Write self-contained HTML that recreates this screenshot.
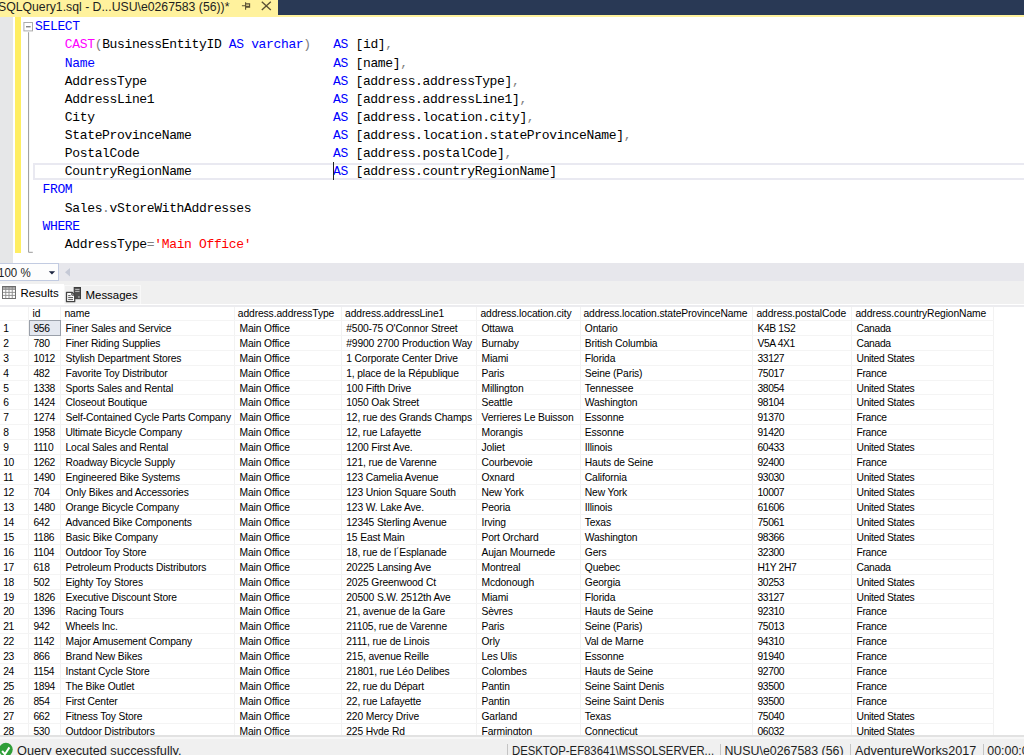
<!DOCTYPE html>
<html><head><meta charset="utf-8"><title>SSMS</title>
<style>
html,body{margin:0;padding:0;}
body{width:1024px;height:755px;overflow:hidden;background:#fff;position:relative;font-family:"Liberation Sans",sans-serif;color:#000;}
.abs{position:absolute;}
#topbar{left:0;top:0;width:1024px;height:15px;background:#293955;}
#topline{left:0;top:14.6px;width:1024px;height:2.6px;background:#FFF29D;}
#tab{left:0;top:0;width:278px;height:17px;background:#FFF29D;}
#tabtxt{left:-2.2px;top:-2.4px;font-size:12.3px;line-height:18px;white-space:pre;color:#1e1e1e;transform:scaleX(0.996);transform-origin:0 0;}
#gutter{left:0;top:17.3px;width:13.3px;height:246px;background:#E6E7E8;}
#ybar{left:15.1px;top:17.2px;width:5.8px;height:235.5px;background:#FFEE62;}
.code{left:35.05px;font-family:"Liberation Mono",monospace;font-size:13px;letter-spacing:-0.35px;line-height:18px;height:18px;white-space:pre;color:#000;}
.k{color:#0000FF}.f{color:#FF00FF}.g{color:#808080}.s{color:#FF0000}
#curline{left:32.8px;top:162.7px;width:1000px;height:13.7px;border:2px solid #E9E9F1;}
#caret{left:333.1px;top:162.4px;width:1.4px;height:17.3px;background:#222;}
#zoombar{left:0;top:263.2px;width:1024px;height:17.5px;background:#E7E7EC;}
#zoombox{left:-2px;top:263.3px;width:58.8px;height:16.2px;background:#FDFDFD;border:1px solid #C2CBE1;}
#zoomtxt{left:-2.5px;top:263.7px;font-size:12.2px;line-height:18px;white-space:pre;color:#1e1e1e;transform:scaleX(0.945);transform-origin:0 0;}
#tabsrow{left:0;top:280.7px;width:1024px;height:23.2px;background:#F0F0F0;}
#restab{left:0;top:283.5px;width:63.7px;height:21.5px;background:#fff;}
#msgtab{left:63.8px;top:285px;width:74.8px;height:17.8px;background:#F0F0F0;border:1px solid #F8F8F8;}
.tl{font-size:11.45px;line-height:14px;white-space:pre;color:#000;}
#grid{left:0;top:303.9px;width:1024px;height:431.2px;background:#fff;}
.gt{font-size:10.3px;line-height:15px;height:15px;white-space:pre;color:#000;letter-spacing:-0.15px;}
.gh{letter-spacing:-0.11px;}
.gn{letter-spacing:-0.4px;}
.gc{letter-spacing:-0.3px;}
.hl{height:1px;background:#F4F4F4;left:0;width:993.6px;}
.vl{width:1px;background:#F2F2F2;top:305.5px;height:429.5px;}
#status{left:0;top:735px;width:1024px;height:20px;background:#F0F0F0;}
#stl1{left:0;top:735px;width:1024px;height:1.7px;background:#E2E2E2;}
#stl2{left:0;top:736.7px;width:1024px;height:2.3px;background:#F7F7F7;}
.st{font-size:12.4px;line-height:18px;white-space:pre;color:#1e1e1e;top:741.6px;transform:scaleX(1.034);transform-origin:0 0;}
.ss{width:1px;top:743.5px;height:12px;background:#C4C4C4;}
</style></head><body>

<div class="abs" id="topbar"></div><div class="abs" id="topline"></div><div class="abs" id="tab"></div>
<div class="abs" id="tabtxt">SQLQuery1.sql - D...USU\e0267583 (56))*</div>
<svg class="abs" style="left:241px;top:1px" width="12" height="11" viewBox="0 0 12 11"><g fill="none" stroke="#5A5034" stroke-width="1.1"><path d="M0.9 4.75H4.6M4.6 1.2V8.7M4.6 2.9H8.6V6.3H4.6M4.6 5.4H8.6"/></g></svg>
<svg class="abs" style="left:260px;top:0px" width="13" height="12" viewBox="0 0 13 12"><g fill="none" stroke="#5A5034" stroke-width="1.35"><path d="M1.8 1.8L10.8 10M10.8 1.8L1.8 10"/></g></svg>
<div class="abs" id="gutter"></div><div class="abs" id="ybar"></div>
<svg class="abs" style="left:22px;top:20px" width="14" height="236" viewBox="0 0 14 236"><g fill="none" stroke-width="1"><path d="M6.6 12.2V232.3H10.8" stroke="#9A9A9A"/><rect x="1.9" y="2.5" width="8.6" height="8.4" fill="#fff" stroke="#ABABAB"/></g><path d="M4 6.8H8.6" stroke="#555" stroke-width="1"/></svg>
<div class="abs" id="curline"></div>
<div class="abs code" style="top:18.30px"><span class="k">SELECT</span></div>
<div class="abs code" style="top:36.42px">    <span class="f">CAST</span><span class="g">(</span>BusinessEntityID <span class="k">AS</span> <span class="k">varchar</span><span class="g">)</span>   <span class="k">AS</span> [id]<span class="g">,</span></div>
<div class="abs code" style="top:54.54px">    <span class="k">Name</span>                                <span class="k">AS</span> [name]<span class="g">,</span></div>
<div class="abs code" style="top:72.66px">    AddressType                         <span class="k">AS</span> [address.addressType]<span class="g">,</span></div>
<div class="abs code" style="top:90.78px">    AddressLine1                        <span class="k">AS</span> [address.addressLine1]<span class="g">,</span></div>
<div class="abs code" style="top:108.90px">    City                                <span class="k">AS</span> [address.location.city]<span class="g">,</span></div>
<div class="abs code" style="top:127.02px">    StateProvinceName                   <span class="k">AS</span> [address.location.stateProvinceName]<span class="g">,</span></div>
<div class="abs code" style="top:145.14px">    PostalCode                          <span class="k">AS</span> [address.postalCode]<span class="g">,</span></div>
<div class="abs code" style="top:163.26px">    CountryRegionName                   <span class="k">AS</span> [address.countryRegionName]</div>
<div class="abs code" style="top:181.38px"> <span class="k">FROM</span></div>
<div class="abs code" style="top:199.50px">    Sales<span class="g">.</span>vStoreWithAddresses</div>
<div class="abs code" style="top:217.62px"> <span class="k">WHERE</span></div>
<div class="abs code" style="top:235.74px">    AddressType<span class="g">=</span><span class="s">'Main Office'</span></div>
<div class="abs" id="caret"></div>
<div class="abs" id="zoombar"></div><div class="abs" id="zoombox"></div><div class="abs" id="zoomtxt">100 %</div>
<svg class="abs" style="left:48px;top:269px" width="8" height="7" viewBox="0 0 8 7"><path d="M0.8 2.2H7.1L3.95 5.5Z" fill="#1B2540"/></svg>
<svg class="abs" style="left:64px;top:267px" width="8" height="11" viewBox="0 0 8 11"><path d="M6 1V9.6L1 5.3Z" fill="#C5C9D6"/></svg>
<div class="abs" id="tabsrow"></div><div class="abs" id="restab"></div><div class="abs" id="msgtab"></div>
<div class="abs tl" style="left:20.5px;top:286.4px">Results</div>
<div class="abs tl" style="left:85.5px;top:288.2px">Messages</div>
<svg class="abs" style="left:2px;top:286px" width="14" height="13" viewBox="0 0 14 13"><rect x="0.5" y="0.5" width="13" height="12" fill="#fff"/><rect x="0.5" y="0.5" width="13" height="3" fill="#B5B5B5"/><path d="M0.5 3.4H13.5M0.5 6.4H13.5M0.5 9.4H13.5M3.75 0.5V12.5M7 0.5V12.5M10.25 0.5V12.5" stroke="#8C8C8C" stroke-width="0.9" fill="none"/><rect x="0.5" y="0.5" width="13" height="12" fill="none" stroke="#707070" stroke-width="1"/><path d="M0.5 0.6H13.5" stroke="#6A6A6A" stroke-width="1.2"/></svg>
<svg class="abs" style="left:65px;top:286px" width="18" height="17" viewBox="0 0 18 17"><rect x="9.2" y="1.5" width="6.3" height="11.2" fill="#505050" stroke="#3C3C3C" stroke-width="1"/><path d="M10.2 3.4H14.5M10.2 5.4H14.5" stroke="#C8C8C8" stroke-width="0.9"/><rect x="13.3" y="10.4" width="1.2" height="1.2" fill="#ddd"/><path d="M1.5 6.3H7L9.7 9V15.7H1.5Z" fill="#fff" stroke="#444" stroke-width="1.3" stroke-linejoin="round"/><path d="M6.8 6.5V9.2H9.5" fill="none" stroke="#444" stroke-width="1"/><path d="M3.2 9.6H5.6M3.2 11.6H8M3.2 13.6H8" stroke="#555" stroke-width="1"/></svg>
<div class="abs" id="grid"></div>
<div class="abs vl" style="left:28.3px"></div>
<div class="abs vl" style="left:60.4px"></div>
<div class="abs vl" style="left:234.3px"></div>
<div class="abs vl" style="left:341px"></div>
<div class="abs vl" style="left:476.4px"></div>
<div class="abs vl" style="left:579.9px"></div>
<div class="abs vl" style="left:752.4px"></div>
<div class="abs vl" style="left:851.3px"></div>
<div class="abs vl" style="left:993.1px"></div>
<div class="abs hl" style="top:305.4px;height:1.3px;width:1024px;background:#ECECEF"></div>
<div class="abs hl" style="top:319.80px"></div>
<div class="abs hl" style="top:334.73px"></div>
<div class="abs hl" style="top:349.66px"></div>
<div class="abs hl" style="top:364.59px"></div>
<div class="abs hl" style="top:379.52px"></div>
<div class="abs hl" style="top:394.45px"></div>
<div class="abs hl" style="top:409.38px"></div>
<div class="abs hl" style="top:424.31px"></div>
<div class="abs hl" style="top:439.24px"></div>
<div class="abs hl" style="top:454.17px"></div>
<div class="abs hl" style="top:469.10px"></div>
<div class="abs hl" style="top:484.03px"></div>
<div class="abs hl" style="top:498.96px"></div>
<div class="abs hl" style="top:513.89px"></div>
<div class="abs hl" style="top:528.82px"></div>
<div class="abs hl" style="top:543.75px"></div>
<div class="abs hl" style="top:558.68px"></div>
<div class="abs hl" style="top:573.61px"></div>
<div class="abs hl" style="top:588.54px"></div>
<div class="abs hl" style="top:603.47px"></div>
<div class="abs hl" style="top:618.40px"></div>
<div class="abs hl" style="top:633.33px"></div>
<div class="abs hl" style="top:648.26px"></div>
<div class="abs hl" style="top:663.19px"></div>
<div class="abs hl" style="top:678.12px"></div>
<div class="abs hl" style="top:693.05px"></div>
<div class="abs hl" style="top:707.98px"></div>
<div class="abs hl" style="top:722.91px"></div>
<div class="abs hl" style="top:737.84px"></div>
<div class="abs" style="left:29px;top:319.80px;width:30px;height:14px;background:#E4E8F0;border:1px solid #9AA0AA"></div>
<div class="abs gt gh" style="left:32.5px;top:305.90px">id</div>
<div class="abs gt gh" style="left:64.5px;top:305.90px">name</div>
<div class="abs gt gh" style="left:237.8px;top:305.90px">address.addressType</div>
<div class="abs gt gh" style="left:345.1px;top:305.90px">address.addressLine1</div>
<div class="abs gt gh" style="left:480.5px;top:305.90px">address.location.city</div>
<div class="abs gt gh" style="left:583.5px;top:305.90px">address.location.stateProvinceName</div>
<div class="abs gt gh" style="left:756.5px;top:305.90px">address.postalCode</div>
<div class="abs gt gh" style="left:855.5px;top:305.90px">address.countryRegionName</div>
<div class="abs gt gn" style="left:3.3px;top:320.80px">1</div>
<div class="abs gt gn" style="left:33.5px;top:320.80px">956</div>
<div class="abs gt" style="left:65.5px;top:320.80px">Finer Sales and Service</div>
<div class="abs gt" style="left:239.6px;top:320.80px">Main Office</div>
<div class="abs gt" style="left:346.3px;top:320.80px">#500-75 O'Connor Street</div>
<div class="abs gt" style="left:481.5px;top:320.80px">Ottawa</div>
<div class="abs gt" style="left:584.8px;top:320.80px">Ontario</div>
<div class="abs gt gn" style="left:757.5px;top:320.80px">K4B 1S2</div>
<div class="abs gt gc" style="left:856.5px;top:320.80px">Canada</div>
<div class="abs gt gn" style="left:3.3px;top:335.73px">2</div>
<div class="abs gt gn" style="left:33.5px;top:335.73px">780</div>
<div class="abs gt" style="left:65.5px;top:335.73px">Finer Riding Supplies</div>
<div class="abs gt" style="left:239.6px;top:335.73px">Main Office</div>
<div class="abs gt" style="left:346.3px;top:335.73px">#9900 2700 Production Way</div>
<div class="abs gt" style="left:481.5px;top:335.73px">Burnaby</div>
<div class="abs gt" style="left:584.8px;top:335.73px">British Columbia</div>
<div class="abs gt gn" style="left:757.5px;top:335.73px">V5A 4X1</div>
<div class="abs gt gc" style="left:856.5px;top:335.73px">Canada</div>
<div class="abs gt gn" style="left:3.3px;top:350.66px">3</div>
<div class="abs gt gn" style="left:33.5px;top:350.66px">1012</div>
<div class="abs gt" style="left:65.5px;top:350.66px">Stylish Department Stores</div>
<div class="abs gt" style="left:239.6px;top:350.66px">Main Office</div>
<div class="abs gt" style="left:346.3px;top:350.66px">1 Corporate Center Drive</div>
<div class="abs gt" style="left:481.5px;top:350.66px">Miami</div>
<div class="abs gt" style="left:584.8px;top:350.66px">Florida</div>
<div class="abs gt gn" style="left:757.5px;top:350.66px">33127</div>
<div class="abs gt gc" style="left:856.5px;top:350.66px">United States</div>
<div class="abs gt gn" style="left:3.3px;top:365.59px">4</div>
<div class="abs gt gn" style="left:33.5px;top:365.59px">482</div>
<div class="abs gt" style="left:65.5px;top:365.59px">Favorite Toy Distributor</div>
<div class="abs gt" style="left:239.6px;top:365.59px">Main Office</div>
<div class="abs gt" style="left:346.3px;top:365.59px">1, place de la République</div>
<div class="abs gt" style="left:481.5px;top:365.59px">Paris</div>
<div class="abs gt" style="left:584.8px;top:365.59px">Seine (Paris)</div>
<div class="abs gt gn" style="left:757.5px;top:365.59px">75017</div>
<div class="abs gt gc" style="left:856.5px;top:365.59px">France</div>
<div class="abs gt gn" style="left:3.3px;top:380.52px">5</div>
<div class="abs gt gn" style="left:33.5px;top:380.52px">1338</div>
<div class="abs gt" style="left:65.5px;top:380.52px">Sports Sales and Rental</div>
<div class="abs gt" style="left:239.6px;top:380.52px">Main Office</div>
<div class="abs gt" style="left:346.3px;top:380.52px">100 Fifth Drive</div>
<div class="abs gt" style="left:481.5px;top:380.52px">Millington</div>
<div class="abs gt" style="left:584.8px;top:380.52px">Tennessee</div>
<div class="abs gt gn" style="left:757.5px;top:380.52px">38054</div>
<div class="abs gt gc" style="left:856.5px;top:380.52px">United States</div>
<div class="abs gt gn" style="left:3.3px;top:395.45px">6</div>
<div class="abs gt gn" style="left:33.5px;top:395.45px">1424</div>
<div class="abs gt" style="left:65.5px;top:395.45px">Closeout Boutique</div>
<div class="abs gt" style="left:239.6px;top:395.45px">Main Office</div>
<div class="abs gt" style="left:346.3px;top:395.45px">1050 Oak Street</div>
<div class="abs gt" style="left:481.5px;top:395.45px">Seattle</div>
<div class="abs gt" style="left:584.8px;top:395.45px">Washington</div>
<div class="abs gt gn" style="left:757.5px;top:395.45px">98104</div>
<div class="abs gt gc" style="left:856.5px;top:395.45px">United States</div>
<div class="abs gt gn" style="left:3.3px;top:410.38px">7</div>
<div class="abs gt gn" style="left:33.5px;top:410.38px">1274</div>
<div class="abs gt" style="left:65.5px;top:410.38px">Self-Contained Cycle Parts Company</div>
<div class="abs gt" style="left:239.6px;top:410.38px">Main Office</div>
<div class="abs gt" style="left:346.3px;top:410.38px">12, rue des Grands Champs</div>
<div class="abs gt" style="left:481.5px;top:410.38px">Verrieres Le Buisson</div>
<div class="abs gt" style="left:584.8px;top:410.38px">Essonne</div>
<div class="abs gt gn" style="left:757.5px;top:410.38px">91370</div>
<div class="abs gt gc" style="left:856.5px;top:410.38px">France</div>
<div class="abs gt gn" style="left:3.3px;top:425.31px">8</div>
<div class="abs gt gn" style="left:33.5px;top:425.31px">1958</div>
<div class="abs gt" style="left:65.5px;top:425.31px">Ultimate Bicycle Company</div>
<div class="abs gt" style="left:239.6px;top:425.31px">Main Office</div>
<div class="abs gt" style="left:346.3px;top:425.31px">12, rue Lafayette</div>
<div class="abs gt" style="left:481.5px;top:425.31px">Morangis</div>
<div class="abs gt" style="left:584.8px;top:425.31px">Essonne</div>
<div class="abs gt gn" style="left:757.5px;top:425.31px">91420</div>
<div class="abs gt gc" style="left:856.5px;top:425.31px">France</div>
<div class="abs gt gn" style="left:3.3px;top:440.24px">9</div>
<div class="abs gt gn" style="left:33.5px;top:440.24px">1110</div>
<div class="abs gt" style="left:65.5px;top:440.24px">Local Sales and Rental</div>
<div class="abs gt" style="left:239.6px;top:440.24px">Main Office</div>
<div class="abs gt" style="left:346.3px;top:440.24px">1200 First Ave.</div>
<div class="abs gt" style="left:481.5px;top:440.24px">Joliet</div>
<div class="abs gt" style="left:584.8px;top:440.24px">Illinois</div>
<div class="abs gt gn" style="left:757.5px;top:440.24px">60433</div>
<div class="abs gt gc" style="left:856.5px;top:440.24px">United States</div>
<div class="abs gt gn" style="left:3.3px;top:455.17px">10</div>
<div class="abs gt gn" style="left:33.5px;top:455.17px">1262</div>
<div class="abs gt" style="left:65.5px;top:455.17px">Roadway Bicycle Supply</div>
<div class="abs gt" style="left:239.6px;top:455.17px">Main Office</div>
<div class="abs gt" style="left:346.3px;top:455.17px">121, rue de Varenne</div>
<div class="abs gt" style="left:481.5px;top:455.17px">Courbevoie</div>
<div class="abs gt" style="left:584.8px;top:455.17px">Hauts de Seine</div>
<div class="abs gt gn" style="left:757.5px;top:455.17px">92400</div>
<div class="abs gt gc" style="left:856.5px;top:455.17px">France</div>
<div class="abs gt gn" style="left:3.3px;top:470.10px">11</div>
<div class="abs gt gn" style="left:33.5px;top:470.10px">1490</div>
<div class="abs gt" style="left:65.5px;top:470.10px">Engineered Bike Systems</div>
<div class="abs gt" style="left:239.6px;top:470.10px">Main Office</div>
<div class="abs gt" style="left:346.3px;top:470.10px">123 Camelia Avenue</div>
<div class="abs gt" style="left:481.5px;top:470.10px">Oxnard</div>
<div class="abs gt" style="left:584.8px;top:470.10px">California</div>
<div class="abs gt gn" style="left:757.5px;top:470.10px">93030</div>
<div class="abs gt gc" style="left:856.5px;top:470.10px">United States</div>
<div class="abs gt gn" style="left:3.3px;top:485.03px">12</div>
<div class="abs gt gn" style="left:33.5px;top:485.03px">704</div>
<div class="abs gt" style="left:65.5px;top:485.03px">Only Bikes and Accessories</div>
<div class="abs gt" style="left:239.6px;top:485.03px">Main Office</div>
<div class="abs gt" style="left:346.3px;top:485.03px">123 Union Square South</div>
<div class="abs gt" style="left:481.5px;top:485.03px">New York</div>
<div class="abs gt" style="left:584.8px;top:485.03px">New York</div>
<div class="abs gt gn" style="left:757.5px;top:485.03px">10007</div>
<div class="abs gt gc" style="left:856.5px;top:485.03px">United States</div>
<div class="abs gt gn" style="left:3.3px;top:499.96px">13</div>
<div class="abs gt gn" style="left:33.5px;top:499.96px">1480</div>
<div class="abs gt" style="left:65.5px;top:499.96px">Orange Bicycle Company</div>
<div class="abs gt" style="left:239.6px;top:499.96px">Main Office</div>
<div class="abs gt" style="left:346.3px;top:499.96px">123 W. Lake Ave.</div>
<div class="abs gt" style="left:481.5px;top:499.96px">Peoria</div>
<div class="abs gt" style="left:584.8px;top:499.96px">Illinois</div>
<div class="abs gt gn" style="left:757.5px;top:499.96px">61606</div>
<div class="abs gt gc" style="left:856.5px;top:499.96px">United States</div>
<div class="abs gt gn" style="left:3.3px;top:514.89px">14</div>
<div class="abs gt gn" style="left:33.5px;top:514.89px">642</div>
<div class="abs gt" style="left:65.5px;top:514.89px">Advanced Bike Components</div>
<div class="abs gt" style="left:239.6px;top:514.89px">Main Office</div>
<div class="abs gt" style="left:346.3px;top:514.89px">12345 Sterling Avenue</div>
<div class="abs gt" style="left:481.5px;top:514.89px">Irving</div>
<div class="abs gt" style="left:584.8px;top:514.89px">Texas</div>
<div class="abs gt gn" style="left:757.5px;top:514.89px">75061</div>
<div class="abs gt gc" style="left:856.5px;top:514.89px">United States</div>
<div class="abs gt gn" style="left:3.3px;top:529.82px">15</div>
<div class="abs gt gn" style="left:33.5px;top:529.82px">1186</div>
<div class="abs gt" style="left:65.5px;top:529.82px">Basic Bike Company</div>
<div class="abs gt" style="left:239.6px;top:529.82px">Main Office</div>
<div class="abs gt" style="left:346.3px;top:529.82px">15 East Main</div>
<div class="abs gt" style="left:481.5px;top:529.82px">Port Orchard</div>
<div class="abs gt" style="left:584.8px;top:529.82px">Washington</div>
<div class="abs gt gn" style="left:757.5px;top:529.82px">98366</div>
<div class="abs gt gc" style="left:856.5px;top:529.82px">United States</div>
<div class="abs gt gn" style="left:3.3px;top:544.75px">16</div>
<div class="abs gt gn" style="left:33.5px;top:544.75px">1104</div>
<div class="abs gt" style="left:65.5px;top:544.75px">Outdoor Toy Store</div>
<div class="abs gt" style="left:239.6px;top:544.75px">Main Office</div>
<div class="abs gt" style="left:346.3px;top:544.75px">18, rue de l´Esplanade</div>
<div class="abs gt" style="left:481.5px;top:544.75px">Aujan Mournede</div>
<div class="abs gt" style="left:584.8px;top:544.75px">Gers</div>
<div class="abs gt gn" style="left:757.5px;top:544.75px">32300</div>
<div class="abs gt gc" style="left:856.5px;top:544.75px">France</div>
<div class="abs gt gn" style="left:3.3px;top:559.68px">17</div>
<div class="abs gt gn" style="left:33.5px;top:559.68px">618</div>
<div class="abs gt" style="left:65.5px;top:559.68px">Petroleum Products Distributors</div>
<div class="abs gt" style="left:239.6px;top:559.68px">Main Office</div>
<div class="abs gt" style="left:346.3px;top:559.68px">20225 Lansing Ave</div>
<div class="abs gt" style="left:481.5px;top:559.68px">Montreal</div>
<div class="abs gt" style="left:584.8px;top:559.68px">Quebec</div>
<div class="abs gt gn" style="left:757.5px;top:559.68px">H1Y 2H7</div>
<div class="abs gt gc" style="left:856.5px;top:559.68px">Canada</div>
<div class="abs gt gn" style="left:3.3px;top:574.61px">18</div>
<div class="abs gt gn" style="left:33.5px;top:574.61px">502</div>
<div class="abs gt" style="left:65.5px;top:574.61px">Eighty Toy Stores</div>
<div class="abs gt" style="left:239.6px;top:574.61px">Main Office</div>
<div class="abs gt" style="left:346.3px;top:574.61px">2025 Greenwood Ct</div>
<div class="abs gt" style="left:481.5px;top:574.61px">Mcdonough</div>
<div class="abs gt" style="left:584.8px;top:574.61px">Georgia</div>
<div class="abs gt gn" style="left:757.5px;top:574.61px">30253</div>
<div class="abs gt gc" style="left:856.5px;top:574.61px">United States</div>
<div class="abs gt gn" style="left:3.3px;top:589.54px">19</div>
<div class="abs gt gn" style="left:33.5px;top:589.54px">1826</div>
<div class="abs gt" style="left:65.5px;top:589.54px">Executive Discount Store</div>
<div class="abs gt" style="left:239.6px;top:589.54px">Main Office</div>
<div class="abs gt" style="left:346.3px;top:589.54px">20500 S.W. 2512th Ave</div>
<div class="abs gt" style="left:481.5px;top:589.54px">Miami</div>
<div class="abs gt" style="left:584.8px;top:589.54px">Florida</div>
<div class="abs gt gn" style="left:757.5px;top:589.54px">33127</div>
<div class="abs gt gc" style="left:856.5px;top:589.54px">United States</div>
<div class="abs gt gn" style="left:3.3px;top:604.47px">20</div>
<div class="abs gt gn" style="left:33.5px;top:604.47px">1396</div>
<div class="abs gt" style="left:65.5px;top:604.47px">Racing Tours</div>
<div class="abs gt" style="left:239.6px;top:604.47px">Main Office</div>
<div class="abs gt" style="left:346.3px;top:604.47px">21, avenue de la Gare</div>
<div class="abs gt" style="left:481.5px;top:604.47px">Sèvres</div>
<div class="abs gt" style="left:584.8px;top:604.47px">Hauts de Seine</div>
<div class="abs gt gn" style="left:757.5px;top:604.47px">92310</div>
<div class="abs gt gc" style="left:856.5px;top:604.47px">France</div>
<div class="abs gt gn" style="left:3.3px;top:619.40px">21</div>
<div class="abs gt gn" style="left:33.5px;top:619.40px">942</div>
<div class="abs gt" style="left:65.5px;top:619.40px">Wheels Inc.</div>
<div class="abs gt" style="left:239.6px;top:619.40px">Main Office</div>
<div class="abs gt" style="left:346.3px;top:619.40px">21105, rue de Varenne</div>
<div class="abs gt" style="left:481.5px;top:619.40px">Paris</div>
<div class="abs gt" style="left:584.8px;top:619.40px">Seine (Paris)</div>
<div class="abs gt gn" style="left:757.5px;top:619.40px">75013</div>
<div class="abs gt gc" style="left:856.5px;top:619.40px">France</div>
<div class="abs gt gn" style="left:3.3px;top:634.33px">22</div>
<div class="abs gt gn" style="left:33.5px;top:634.33px">1142</div>
<div class="abs gt" style="left:65.5px;top:634.33px">Major Amusement Company</div>
<div class="abs gt" style="left:239.6px;top:634.33px">Main Office</div>
<div class="abs gt" style="left:346.3px;top:634.33px">2111, rue de Linois</div>
<div class="abs gt" style="left:481.5px;top:634.33px">Orly</div>
<div class="abs gt" style="left:584.8px;top:634.33px">Val de Marne</div>
<div class="abs gt gn" style="left:757.5px;top:634.33px">94310</div>
<div class="abs gt gc" style="left:856.5px;top:634.33px">France</div>
<div class="abs gt gn" style="left:3.3px;top:649.26px">23</div>
<div class="abs gt gn" style="left:33.5px;top:649.26px">866</div>
<div class="abs gt" style="left:65.5px;top:649.26px">Brand New Bikes</div>
<div class="abs gt" style="left:239.6px;top:649.26px">Main Office</div>
<div class="abs gt" style="left:346.3px;top:649.26px">215, avenue Reille</div>
<div class="abs gt" style="left:481.5px;top:649.26px">Les Ulis</div>
<div class="abs gt" style="left:584.8px;top:649.26px">Essonne</div>
<div class="abs gt gn" style="left:757.5px;top:649.26px">91940</div>
<div class="abs gt gc" style="left:856.5px;top:649.26px">France</div>
<div class="abs gt gn" style="left:3.3px;top:664.19px">24</div>
<div class="abs gt gn" style="left:33.5px;top:664.19px">1154</div>
<div class="abs gt" style="left:65.5px;top:664.19px">Instant Cycle Store</div>
<div class="abs gt" style="left:239.6px;top:664.19px">Main Office</div>
<div class="abs gt" style="left:346.3px;top:664.19px">21801, rue Léo Delibes</div>
<div class="abs gt" style="left:481.5px;top:664.19px">Colombes</div>
<div class="abs gt" style="left:584.8px;top:664.19px">Hauts de Seine</div>
<div class="abs gt gn" style="left:757.5px;top:664.19px">92700</div>
<div class="abs gt gc" style="left:856.5px;top:664.19px">France</div>
<div class="abs gt gn" style="left:3.3px;top:679.12px">25</div>
<div class="abs gt gn" style="left:33.5px;top:679.12px">1894</div>
<div class="abs gt" style="left:65.5px;top:679.12px">The Bike Outlet</div>
<div class="abs gt" style="left:239.6px;top:679.12px">Main Office</div>
<div class="abs gt" style="left:346.3px;top:679.12px">22, rue du Départ</div>
<div class="abs gt" style="left:481.5px;top:679.12px">Pantin</div>
<div class="abs gt" style="left:584.8px;top:679.12px">Seine Saint Denis</div>
<div class="abs gt gn" style="left:757.5px;top:679.12px">93500</div>
<div class="abs gt gc" style="left:856.5px;top:679.12px">France</div>
<div class="abs gt gn" style="left:3.3px;top:694.05px">26</div>
<div class="abs gt gn" style="left:33.5px;top:694.05px">854</div>
<div class="abs gt" style="left:65.5px;top:694.05px">First Center</div>
<div class="abs gt" style="left:239.6px;top:694.05px">Main Office</div>
<div class="abs gt" style="left:346.3px;top:694.05px">22, rue Lafayette</div>
<div class="abs gt" style="left:481.5px;top:694.05px">Pantin</div>
<div class="abs gt" style="left:584.8px;top:694.05px">Seine Saint Denis</div>
<div class="abs gt gn" style="left:757.5px;top:694.05px">93500</div>
<div class="abs gt gc" style="left:856.5px;top:694.05px">France</div>
<div class="abs gt gn" style="left:3.3px;top:708.98px">27</div>
<div class="abs gt gn" style="left:33.5px;top:708.98px">662</div>
<div class="abs gt" style="left:65.5px;top:708.98px">Fitness Toy Store</div>
<div class="abs gt" style="left:239.6px;top:708.98px">Main Office</div>
<div class="abs gt" style="left:346.3px;top:708.98px">220 Mercy Drive</div>
<div class="abs gt" style="left:481.5px;top:708.98px">Garland</div>
<div class="abs gt" style="left:584.8px;top:708.98px">Texas</div>
<div class="abs gt gn" style="left:757.5px;top:708.98px">75040</div>
<div class="abs gt gc" style="left:856.5px;top:708.98px">United States</div>
<div class="abs gt gn" style="left:3.3px;top:723.91px">28</div>
<div class="abs gt gn" style="left:33.5px;top:723.91px">530</div>
<div class="abs gt" style="left:65.5px;top:723.91px">Outdoor Distributors</div>
<div class="abs gt" style="left:239.6px;top:723.91px">Main Office</div>
<div class="abs gt" style="left:346.3px;top:723.91px">225 Hyde Rd</div>
<div class="abs gt" style="left:481.5px;top:723.91px">Farmington</div>
<div class="abs gt" style="left:584.8px;top:723.91px">Connecticut</div>
<div class="abs gt gn" style="left:757.5px;top:723.91px">06032</div>
<div class="abs gt gc" style="left:856.5px;top:723.91px">United States</div>
<div class="abs" id="status"></div><div class="abs" id="stl1"></div><div class="abs" id="stl2"></div>
<svg class="abs" style="left:-1px;top:742px" width="15" height="14" viewBox="0 0 15 14"><circle cx="6.9" cy="7.6" r="6.85" fill="#2F9E38"/><path d="M3.1 9L5.9 12.2L10.4 5.4" stroke="#fff" stroke-width="2" fill="none"/></svg>
<div class="abs st" style="left:17px;transform:scaleX(1.027)">Query executed successfully.</div>
<div class="abs st" style="left:511.8px;transform:scaleX(0.913)">DESKTOP-EF83641\MSSQLSERVER...</div>
<div class="abs st" style="left:724.4px;transform:scaleX(1)">NUSU\e0267583 (56)</div>
<div class="abs st" style="left:855px;transform:scaleX(1.02)">AdventureWorks2017</div>
<div class="abs st" style="left:987.3px;transform:scaleX(1)">00:00:00</div>
<div class="abs ss" style="left:507.1px"></div>
<div class="abs ss" style="left:719.8px"></div>
<div class="abs ss" style="left:849.8px"></div>
<div class="abs ss" style="left:982.7px"></div>
</body></html>
